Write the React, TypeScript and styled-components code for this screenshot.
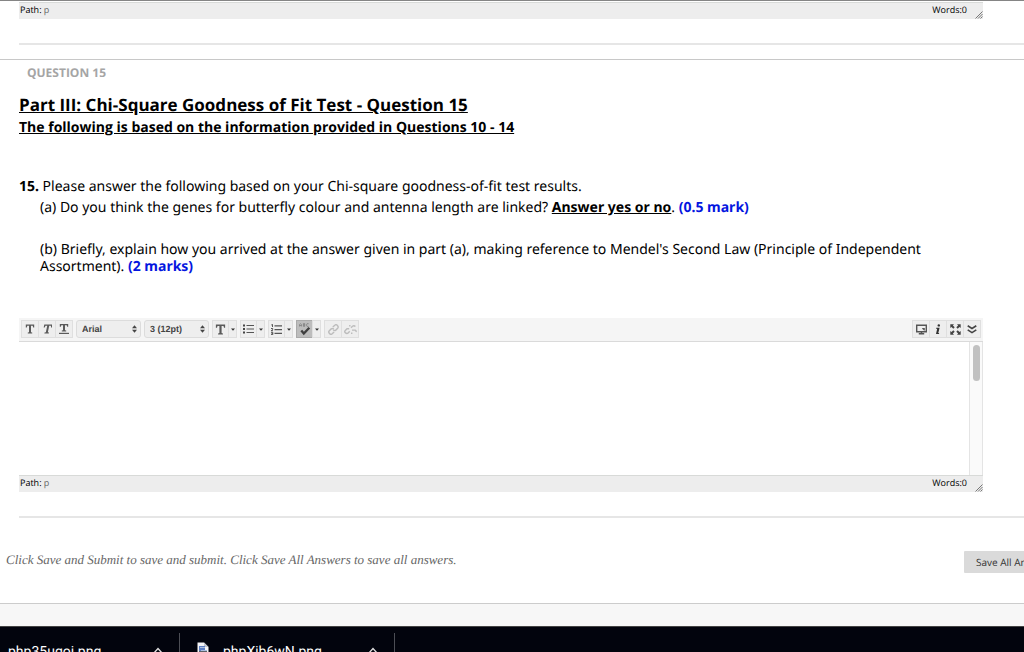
import React from 'react';
import styled, { createGlobalStyle, css } from 'styled-components';

const Global = createGlobalStyle`
  *, *::before, *::after { box-sizing: border-box; }
  html, body { margin: 0; overflow: hidden; background: #fff; }
  body {
    font-family: "Open Sans", "Noto Sans", sans-serif;
    color: #000;
    font-size: 14px;
    text-rendering: geometricPrecision;
  }
  button, select { text-rendering: inherit; }
  h1, h2, h3, p { margin: 0; }
`;

const Page = styled.main`
  border-top: 1px solid #858585;
`;

const Rule = styled.hr`
  margin: 0 0 0 19px;
  border: 0;
  height: 2px;
  background: #e6e6e6;
`;

const PreviousQuestion = styled.section`
  padding-bottom: 14px;
  border-bottom: 1px solid #c8c8c8;
`;

const EditorFrame = styled.div`
  margin: 0 41px 0 19px;
`;

const StatusBar = styled.div`
  display: flex;
  align-items: flex-start;
  height: 17px;
  padding-left: 1px;
  background: #ededed;
  border-top: 1px solid #d8dad8;
  font-size: 9px;
  line-height: 14px;
`;

const Path = styled.span`
  flex: 1;
  em { font-style: normal; color: #666; }
`;

const Grip = styled.svg`
  align-self: flex-end;
  width: 8px;
  height: 8px;
  margin-left: 8px;
`;

const PreviousEditor = styled(EditorFrame)`
  padding: 1px 0 24px;
`;

const Question = styled.section`
  padding-bottom: 24px;
`;

const QuestionLabel = styled.h3`
  padding: 4px 0 0 27px;
  font-size: 12px;
  line-height: 17px;
  color: #a5a5a5;
`;

const Prompt = styled.div`
  padding: 12px 90px 43px 19px;
  line-height: 17px;
`;

const Title = styled.h1`
  font-size: 17px;
  line-height: 24px;
  text-decoration: underline;
`;

const Subtitle = styled.h2`
  font-size: 14px;
  line-height: 22px;
  margin-bottom: 38px;
  text-decoration: underline;
`;

const Lead = styled.p`
  font-family: "Noto Sans", "Open Sans", sans-serif;
  line-height: 20px;
`;

const Part = styled.p`
  padding-left: 21px;
  margin: 2px 0 25px;
  font-family: "Noto Sans", "Open Sans", sans-serif;
  &:last-child { margin-bottom: 0; }
`;

const Mark = styled.strong`
  color: #0416e0;
`;

const Toolbar = styled.div`
  display: flex;
  align-items: flex-start;
  height: 24px;
  padding: 2px 2px 0;
  gap: 3px;
  background: #f5f5f5;
  border-bottom: 1px solid #dadada;
`;

const Group = styled.div`
  display: flex;
`;

const Spacer = styled.div`
  flex: 1;
`;

const ToolButton = styled.button<{ $active?: boolean; $faded?: boolean; $caret?: boolean; $split?: boolean }>`
  display: flex;
  align-items: center;
  justify-content: center;
  width: ${p => (p.$caret ? 9 : p.$split ? 17 : 18)}px;
  height: 18px;
  padding: 0;
  border: 1px solid #dfdfdf;
  background: #eee;
  color: #5a5a5a;
  & + & { margin-left: -1px; }
  ${p => p.$faded && css`color: #bcbcbc;`}
  ${p => p.$active && css`background: #bdbdbd; border-color: #aaa;`}
  svg { display: block; flex: none; }
`;

const SelectBox = styled.label`
  display: grid;
  align-items: center;
  width: 65px;
  height: 18px;
  > * { grid-area: 1 / 1; }
  svg { justify-self: end; margin-right: 4px; pointer-events: none; }
`;

const Select = styled.select`
  appearance: none;
  width: 100%;
  height: 18px;
  padding: 0 14px 0 5px;
  border: 1px solid #dcdcdc;
  border-radius: 3px;
  background: #eee;
  color: #444;
  font: bold 9px/16px "Liberation Sans", Arial, sans-serif;
`;

const Writing = styled.div`
  display: flex;
  height: 133px;
  border-right: 1px solid #e4e4e4;
`;

const Answer = styled.textarea`
  flex: 1;
  min-width: 0;
  border: 0;
  resize: none;
  outline: 0;
  background: #fff;
`;

const Track = styled.div`
  width: 13px;
  padding: 3px 2px 0 3px;
  border-left: 1px solid #e4e4e4;
  background: #fafafa;
`;

const Thumb = styled.div`
  width: 7px;
  height: 36px;
  border-radius: 4px;
  background: #c1c1c1;
`;

const SubmitRow = styled.footer`
  display: flex;
  align-items: center;
  justify-content: space-between;
  padding: 33px 0 30px 6px;
  border-bottom: 1px solid #ccc;
`;

const Hint = styled.p`
  margin: -2px 0;
  padding-bottom: 4px;
  font: italic 13px/20px "Liberation Serif", serif;
  color: #666;
`;

const Actions = styled.div`
  flex: 0 0 60px;
  overflow: hidden;
`;

const SaveButton = styled.button`
  display: block;
  height: 22px;
  padding: 0 12px;
  border: 0;
  border-radius: 1px;
  background: #dadada;
  color: #333;
  font: 10px/22px "Open Sans", "Noto Sans", sans-serif;
  white-space: nowrap;
`;

const PageEnd = styled.div`
  height: 22px;
  background: #f7f7f7;
`;

const Downloads = styled.aside`
  display: flex;
  height: 50px;
  padding-top: 6px;
  border-top: 1px solid #444;
  background: #02040d;
`;

const Download = styled.div<{ $first?: boolean }>`
  display: flex;
  align-items: center;
  width: ${p => (p.$first ? 180 : 215)}px;
  height: 34px;
  padding: 0 16px 0 ${p => (p.$first ? 8 : 17)}px;
  border-right: 1px solid #4c4e55;
  color: #fff;
  font: 14px/18px Roboto, "Liberation Sans", sans-serif;
`;

const FileName = styled.span`
  flex: 1;
  padding-top: 4px;
`;

const FileIcon = styled.svg`
  margin-right: 14px;
`;

const MenuButton = styled.button`
  display: flex;
  padding: 0;
  border: 0;
  background: none;
`;

const LetterT = ({ slant, underline, size = 10 }: { slant?: boolean; underline?: boolean; size?: number }) => (
  <svg width={size} height={size} viewBox="0 0 10 10" fill="currentColor" aria-hidden="true">
    <g transform={slant ? 'translate(1.6 0) skewX(-12)' : undefined}>
      <path d={underline
        ? 'M.8 0H9.2V2.7H8.2L7.7 1.2H6V6.2L7.2 6.6V7.4H2.8V6.6L4 6.2V1.2H2.3L1.8 2.7H.8Z'
        : 'M.8.5H9.2V3.4H8.2L7.7 1.8H6V8.2L7.2 8.6V9.5H2.8V8.6L4 8.2V1.8H2.3L1.8 3.4H.8Z'} />
    </g>
    {underline && <path d="M0 8.8H10V10H0Z" />}
  </svg>
);

const Caret = () => (
  <svg width="4" height="3" viewBox="0 0 4 3" aria-hidden="true"><path d="M0 .5H4L2 2.7Z" fill="#333" /></svg>
);

const Arrows = () => (
  <svg width="5" height="8" viewBox="0 0 5 8" aria-hidden="true"><path d="M0 3.2 2.5.2 5 3.2ZM0 4.8H5L2.5 7.8Z" fill="#444" /></svg>
);

const CaretButton = ({ label }: { label: string }) => (
  <ToolButton $caret aria-label={label}><Caret /></ToolButton>
);

const GripIcon = () => (
  <Grip viewBox="0 0 8 8" aria-hidden="true">
    <path d="M.5 7.5 7.5.5M3 7.5 7.5 3M5.5 7.5 7.5 5.5" stroke="#777" fill="none" />
  </Grip>
);

const Status = () => (
  <StatusBar>
    <Path>Path: <em>p</em></Path>
    <span>Words:0</span>
    <GripIcon />
  </StatusBar>
);

const ChevronUp = () => (
  <svg width="10" height="7" viewBox="0 0 10 7" aria-hidden="true"><path d="M1 6 5 1.5 9 6" stroke="#ddd" strokeWidth="1.3" fill="none" /></svg>
);

const BulletIcon = () => (
  <svg width="11" height="10" viewBox="0 0 11 10" aria-hidden="true">
    <path d="M0 .5H2V2.5H0ZM0 4H2V6H0ZM0 7.5H2V9.5H0Z" fill="#444" />
    <path d="M3.5 1.5H11M3.5 5H11M3.5 8.5H11" stroke="#555" strokeWidth="1.2" />
  </svg>
);

const NumberIcon = () => (
  <svg width="11" height="11" viewBox="0 0 11 11" aria-hidden="true">
    <path d="M.3 1 1.5.4V3M0 4.5H1.7V5.5L.2 6.7H2M0 8.3H1.8V10.6H0M.5 9.4H1.8" stroke="#444" strokeWidth=".9" fill="none" />
    <path d="M3.5 1.8H11M3.5 5.6H11M3.5 9.4H11" stroke="#555" strokeWidth="1.3" />
  </svg>
);

const SpellIcon = () => (
  <svg width="12" height="13" viewBox="0 0 12 13" aria-hidden="true" fill="none">
    <path d="M.6 3.5V1.5L1.5.6 2.4 1.5V3.5M.6 2.5H2.4M4.4 3.4V.6H5.7V3.4ZM4.4 2H5.7M9.6.7H8L7.6 1.2V2.9L8 3.4H9.6" stroke="#777" strokeWidth=".7" />
    <path d="M2.3 7.6 4.8 10.5 10.3 4.7" stroke="#3f3f3f" strokeWidth="2.3" />
  </svg>
);

const LinkIcon = () => (
  <svg width="11" height="11" viewBox="0 0 11 11" fill="none" stroke="currentColor" strokeWidth="1.4" aria-hidden="true">
    <path d="M4.8 3.1 6.8 1.2Q8 0 9.4 1.5T9.7 4.2L7.8 6.1Q6.6 7 5.2 6M6.1 7.9 4.2 9.8Q2.9 11 1.5 9.5T1.3 6.8L3.2 4.9Q4.5 4 5.8 5.1" />
  </svg>
);

const UnlinkIcon = () => (
  <svg width="13" height="11" viewBox="0 0 13 11" fill="none" stroke="currentColor" strokeWidth="1.4" aria-hidden="true">
    <path d="M7 3.7 8.5 2.3Q10 1 11.4 2.5M8 6.1H11.2Q12.4 6.7 12 8M5.7 7.3 4.4 8.7Q3 10 1.5 8.9T1.3 6.4L3 4.8H5.2M5.8 1V2.4M7.7 8.6V10" />
  </svg>
);

const MonitorIcon = () => (
  <svg width="11" height="11" viewBox="0 0 11 11" aria-hidden="true">
    <path d="M.7 1.2H10.3V7.7H.7ZM5.5 7.7V9.5M2.8 9.8H8.2" stroke="#555" strokeWidth="1.4" fill="none" />
    <path d="M6.2 4H8.8V6.6H8L6.2 4.7Z" fill="#555" />
  </svg>
);

const InfoIcon = () => (
  <svg width="6" height="11" viewBox="0 0 6 11" fill="#333" aria-hidden="true">
    <circle cx="3.8" cy="1.4" r="1.2" />
    <path d="M1.3 3.8H4.6L3.3 9H4.3L3.8 10H1L2.2 4.7H1Z" />
  </svg>
);

const ExpandIcon = () => (
  <svg width="11" height="11" viewBox="0 0 11 11" fill="#444" aria-hidden="true">
    <path d="M.3.3H4L2.9 1.5 4.7 3.3 3.3 4.7 1.5 2.9.3 4ZM10.7.3V4L9.5 2.9 7.7 4.7 6.3 3.3 8.1 1.5 7 .3ZM.3 10.7V7L1.5 8.1 3.3 6.3 4.7 7.7 2.9 9.5 4 10.7ZM10.7 10.7H7L8.1 9.5 6.3 7.7 7.7 6.3 9.5 8.1 10.7 7Z" />
  </svg>
);

const MoreIcon = () => (
  <svg width="10" height="9" viewBox="0 0 10 9" fill="none" stroke="#444" strokeWidth="1.6" aria-hidden="true">
    <path d="M.7 .8 5 3.5 9.3 .8M.7 4.9 5 7.6 9.3 4.9" />
  </svg>
);

const PictureFile = () => (
  <FileIcon width="12" height="16" viewBox="0 0 12 16" aria-hidden="true">
    <path d="M.5.5H7L11.5 5V15.5H.5Z" fill="#f4f4f6" />
    <path d="M7 .5V5H11.5Z" fill="#c2c5cc" />
    <path d="M2 4H8V9H2Z" fill="#5d7fc4" />
    <path d="M3 5H8V6H3ZM4 8H10V11H4Z" fill="#a9bedf" />
    <path d="M2 9H10V12H2Z" fill="#5d6268" />
  </FileIcon>
);

export default function App() {
  return (
    <>
      <Global />
      <Page>
        <PreviousQuestion>
          <PreviousEditor><Status /></PreviousEditor>
          <Rule />
        </PreviousQuestion>

        <Question>
          <QuestionLabel>QUESTION 15</QuestionLabel>
          <Prompt>
            <Title>Part III: Chi-Square Goodness of Fit Test - Question 15</Title>
            <Subtitle>The following is based on the information provided in Questions 10 - 14</Subtitle>
            <Lead><strong>15.</strong> Please answer the following based on your Chi-square goodness-of-fit test results.</Lead>
            <Part>
              (a) Do you think the genes for butterfly colour and antenna length are linked?{' '}
              <strong><u>Answer yes or no</u></strong>. <Mark>(0.5 mark)</Mark>
            </Part>
            <Part>
              (b) Briefly, explain how you arrived at the answer given in part (a), making reference to Mendel's Second Law (Principle of Independent Assortment). <Mark>(2 marks)</Mark>
            </Part>
          </Prompt>

          <EditorFrame>
            <Toolbar>
              <Group>
                <ToolButton aria-label="Bold"><LetterT /></ToolButton>
                <ToolButton aria-label="Italic"><LetterT slant /></ToolButton>
                <ToolButton aria-label="Underline"><LetterT underline /></ToolButton>
              </Group>
              <SelectBox>
                <Select aria-label="Font" defaultValue="Arial"><option>Arial</option></Select>
                <Arrows />
              </SelectBox>
              <SelectBox>
                <Select aria-label="Font size" defaultValue="3 (12pt)"><option>3 (12pt)</option></Select>
                <Arrows />
              </SelectBox>
              <Group>
                <ToolButton $split aria-label="Text colour"><LetterT size={11} /></ToolButton>
                <CaretButton label="Text colour options" />
              </Group>
              <Group>
                <ToolButton $split aria-label="Bulleted list"><BulletIcon /></ToolButton>
                <CaretButton label="Bulleted list options" />
              </Group>
              <Group>
                <ToolButton $split aria-label="Numbered list"><NumberIcon /></ToolButton>
                <CaretButton label="Numbered list options" />
              </Group>
              <Group>
                <ToolButton $split $active aria-label="Spell check"><SpellIcon /></ToolButton>
                <CaretButton label="Spell check options" />
              </Group>
              <Group>
                <ToolButton $faded aria-label="Insert link"><LinkIcon /></ToolButton>
                <ToolButton $faded aria-label="Remove link"><UnlinkIcon /></ToolButton>
              </Group>
              <Spacer />
              <Group>
                <ToolButton aria-label="Preview"><MonitorIcon /></ToolButton>
                <ToolButton aria-label="Help"><InfoIcon /></ToolButton>
                <ToolButton aria-label="Full screen"><ExpandIcon /></ToolButton>
                <ToolButton aria-label="Show more"><MoreIcon /></ToolButton>
              </Group>
            </Toolbar>
            <Writing>
              <Answer aria-label="Answer to question 15" />
              <Track><Thumb /></Track>
            </Writing>
            <Status />
          </EditorFrame>
        </Question>

        <Rule />
        <SubmitRow>
          <Hint>Click Save and Submit to save and submit. Click Save All Answers to save all answers.</Hint>
          <Actions><SaveButton>Save All Answers</SaveButton></Actions>
        </SubmitRow>
        <PageEnd />
        <Downloads>
          <Download $first>
            <FileName>php35ugoi.png</FileName>
            <MenuButton aria-label="Options for php35ugoi.png"><ChevronUp /></MenuButton>
          </Download>
          <Download>
            <PictureFile />
            <FileName>phpXjb6wN.png</FileName>
            <MenuButton aria-label="Options for phpXjb6wN.png"><ChevronUp /></MenuButton>
          </Download>
        </Downloads>
      </Page>
    </>
  );
}
